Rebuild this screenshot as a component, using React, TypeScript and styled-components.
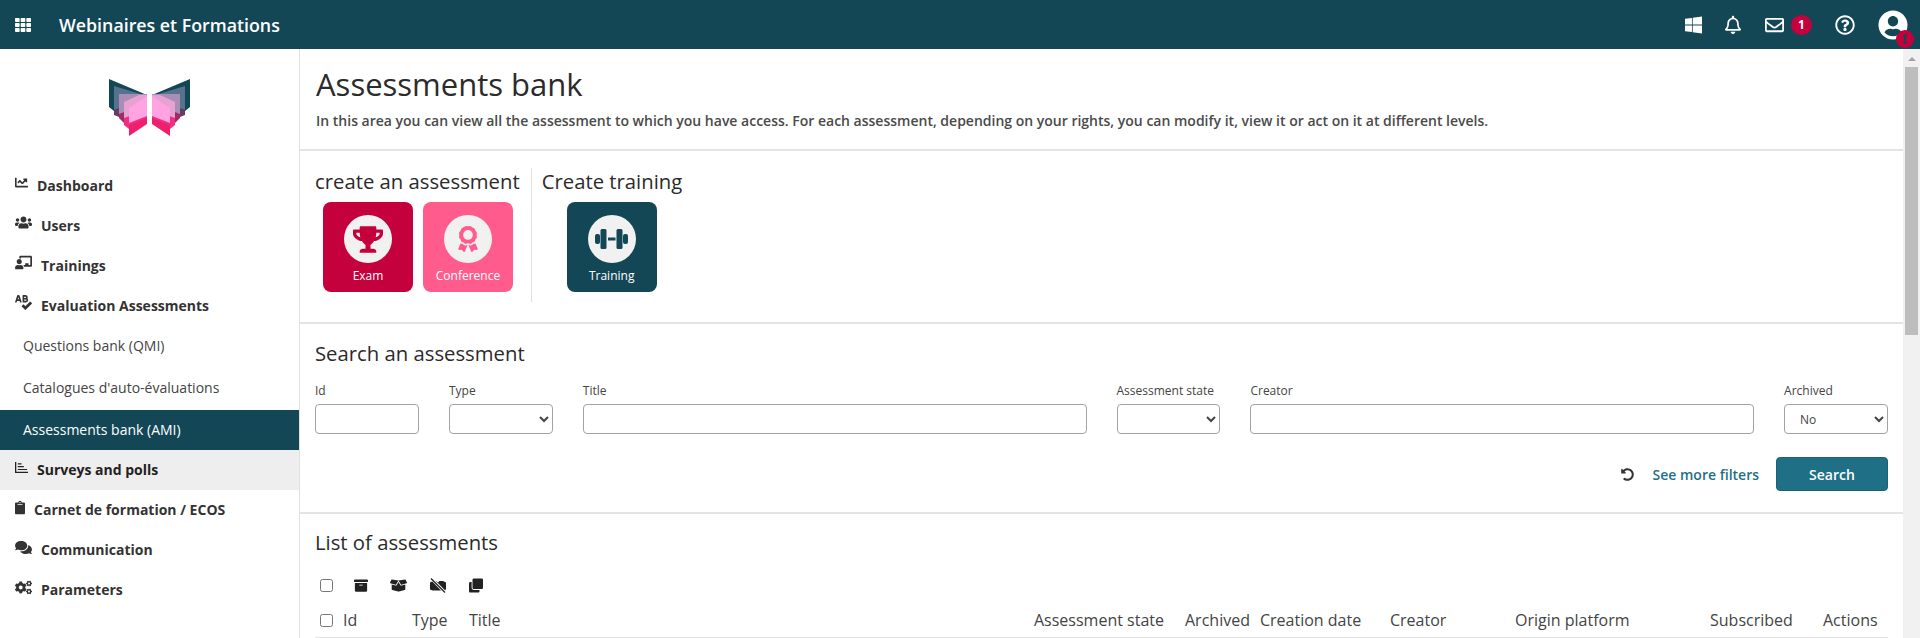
import React from 'react';
import styled, { createGlobalStyle } from 'styled-components';
import {
  FaAward,
  FaBoxOpen,
  FaArchive,
  FaChalkboardTeacher,
  FaChartLine,
  FaClipboard,
  FaClone,
  FaCogs,
  FaComments,
  FaExclamation,
  FaRegBell,
  FaRegEnvelope,
  FaRegQuestionCircle,
  FaSpellCheck,
  FaTh,
  FaTrophy,
  FaUndoAlt,
  FaUserCircle,
  FaUsers,
  FaWindows,
} from 'react-icons/fa';

const GlobalStyle = createGlobalStyle`
  html, body {
    margin: 0;
    height: 100%;
    overflow: hidden;
    background: #fff;
    font-family: "Open Sans", "Liberation Sans", sans-serif;
    color: #333;
  }
  * { box-sizing: border-box; }
`;

const Page = styled.div`
  display: flex;
  flex-direction: column;
  height: 638px;
  overflow: hidden;
`;

const TopBar = styled.header`
  flex: none;
  display: flex;
  align-items: center;
  height: 49px;
  padding-left: 15px;
  background: #134756;
  color: #fff;
`;

const AppName = styled.div`
  margin-left: 28px;
  font-size: 17.8px;
  font-weight: 600;
`;

const TopIcons = styled.div`
  display: flex;
  align-items: center;
  margin-left: auto;
  padding-right: 12px;
`;

const TopIcon = styled.span<{ $w: number; $gap: number }>`
  display: flex;
  margin-right: ${(p) => p.$gap}px;
  svg { width: ${(p) => p.$w}px; height: 20px; }
`;

const CountBadge = styled.span`
  display: flex;
  align-items: center;
  justify-content: center;
  width: 21px;
  height: 20px;
  margin-right: 23px;
  border-radius: 10px;
  background: #c4003d;
  font-size: 12px;
  font-weight: 700;
`;

const Avatar = styled.span`
  position: relative;
  display: flex;
  svg { width: 30px; height: 30px; }
`;

const AlertDot = styled.span`
  position: absolute;
  top: 20px;
  left: 18px;
  display: flex;
  align-items: center;
  justify-content: center;
  width: 18px;
  height: 18px;
  border-radius: 50%;
  background: #c4003d;
  color: #134756;
  svg { width: 10px; height: 10px; }
`;

const Body = styled.div`
  flex: 1;
  display: flex;
  min-height: 0;
`;

const Sidebar = styled.aside`
  flex: none;
  width: 300px;
  border-right: 1px solid #e0e0e0;
`;

const LogoWrap = styled.div`
  display: flex;
  justify-content: center;
  height: 116px;
  padding-top: 27px;
  padding-right: 1px;
`;

const NavItem = styled.div<{ $hover?: boolean; $lower?: boolean; $iconW: number }>`
  display: flex;
  align-items: center;
  gap: 9px;
  height: 40px;
  padding-left: 15px;
  padding-bottom: ${(p) => (p.$lower ? 2 : 0)}px;
  background: ${(p) => (p.$hover ? '#eee' : 'transparent')};
  color: ${(p) => (p.$hover ? '#222' : '#333')};
  font-size: 14px;
  font-weight: 700;
  svg { width: ${(p) => p.$iconW}px; height: 15px; margin-top: ${(p) => (p.$lower ? -4 : -6)}px; flex: none; }
`;

const SubList = styled.div`
  padding-bottom: 2px;
`;

const SubItem = styled.div`
  display: flex;
  align-items: center;
  height: 41.5px;
  padding-left: 23px;
  color: #444;
  font-size: 14px;
`;

const ActiveSubItem = styled(SubItem)`
  height: 40px;
  padding-bottom: 2px;
  background: #134756;
  color: #fff;
`;

const Main = styled.main`
  flex: 1;
  min-width: 0;
`;

const Intro = styled.section`
  height: 102px;
  padding: 15px 16px 0;
  border-bottom: 2px solid #e4e4e4;
`;

const PageTitle = styled.h1`
  margin: 0;
  font-size: 31px;
  font-weight: 500;
  line-height: 41px;
  color: #2b2b2b;
`;

const PageText = styled.p`
  margin: 6px 0 0;
  font-size: 14px;
  font-weight: 600;
  line-height: 19px;
  color: #4a4a4a;
`;

const CreateSection = styled.section`
  display: flex;
  height: 173px;
  padding: 17px 15px 0;
  border-bottom: 2px solid #e4e4e4;
`;

const CreateGroup = styled.div<{ $divider?: boolean }>`
  height: 134px;
  padding-right: 11px;
  margin-right: 10px;
  border-right: ${(p) => (p.$divider ? '1px solid #e0e0e0' : 'none')};
`;

const SectionTitle = styled.h2`
  margin: 0;
  font-size: 20.3px;
  font-weight: 400;
  line-height: 27px;
  color: #2b2b2b;
`;

const Tiles = styled.div<{ $indent: number }>`
  display: flex;
  gap: 10px;
  margin-top: 7px;
  padding-left: ${(p) => p.$indent}px;
`;

const Tile = styled.div<{ $bg: string }>`
  display: flex;
  flex-direction: column;
  align-items: center;
  width: 90px;
  height: 90px;
  padding-top: 13px;
  border-radius: 8px;
  background: ${(p) => p.$bg};
  color: #fff;
  font-size: 12px;
  line-height: 16px;
  svg { color: ${(p) => p.$bg}; }
`;

const TileCircle = styled.span<{ $w: number; $h: number }>`
  display: flex;
  align-items: center;
  justify-content: center;
  width: 48px;
  height: 48px;
  margin-bottom: 5px;
  border-radius: 50%;
  background: #f1f1f1;
  svg { width: ${(p) => p.$w}px; height: ${(p) => p.$h}px; }
`;

const SearchSection = styled.section`
  height: 190px;
  padding: 16px 15px 0;
  border-bottom: 2px solid #e4e4e4;
`;

const FilterGrid = styled.div`
  display: grid;
  grid-template-columns: 104fr 104fr 504fr 104fr 504fr 104fr;
  column-gap: 30px;
  margin-top: 16px;
`;

const Field = styled.label`
  display: flex;
  flex-direction: column;
  gap: 5px;
  font-size: 12px;
  line-height: 16px;
  color: #444;
`;

const TextInput = styled.input`
  width: 100%;
  height: 30px;
  border: 1px solid #a3a3a3;
  border-radius: 4px;
  background: #fff;
`;

const SelectInput = styled.select`
  width: 100%;
  height: 30px;
  padding-left: 11px;
  border: 1px solid #a3a3a3;
  border-radius: 4px;
  background: #fff;
  color: #444;
  font-family: inherit;
  font-size: 12px;
`;

const SearchActions = styled.div`
  display: flex;
  align-items: center;
  justify-content: flex-end;
  margin-top: 23px;
`;

const ResetIcon = styled.span`
  display: flex;
  margin-right: 19px;
  svg { width: 13px; height: 13px; }
`;

const MoreFilters = styled.a`
  margin-right: 17px;
  color: #1f6f87;
  font-size: 14px;
  font-weight: 600;
`;

const SearchButton = styled.button`
  width: 112px;
  height: 34px;
  border: 1px solid #1a6076;
  border-radius: 4px;
  background: #1f6f87;
  color: #fff;
  font-family: inherit;
  font-size: 14px;
  font-weight: 600;
`;

const ListSection = styled.section`
  padding: 15px 15px 0;
`;

const BulkBar = styled.div`
  display: flex;
  align-items: center;
  height: 20px;
  margin-top: 19px;
  padding-left: 5px;
  color: #222;
`;

const Check = styled.input.attrs({ type: 'checkbox' })`
  width: 13px;
  height: 13px;
  margin: 0;
  flex: none;
`;

const BulkIcon = styled.span<{ $w: number; $left: number }>`
  display: flex;
  margin-left: ${(p) => p.$left}px;
  svg { width: ${(p) => p.$w}px; height: 15px; }
`;

const HeadRow = styled.div`
  display: grid;
  grid-template-columns: 28px 69px 57px 565px 151px 75px 130px 125px 195px 113px 65px;
  align-items: center;
  height: 35px;
  margin-top: 9px;
  padding-bottom: 1px;
  border-bottom: 2px solid #e4e4e4;
  font-size: 16px;
  color: #444;
  input { margin-left: 5px; }
`;

const ScrollTrack = styled.div`
  flex: none;
  width: 17px;
  background: #f1f1f1;
`;

const ScrollArrow = styled.span`
  display: block;
  width: 0;
  height: 0;
  margin: 8px auto 0;
  border: 4px solid transparent;
  border-top: 0;
  border-bottom: 4px solid #a3a3a3;
`;

const ScrollThumb = styled.span`
  display: block;
  width: 13px;
  height: 268px;
  margin: 6px 0 0 2px;
  background: #bdbdbd;
`;

const SurveyIcon: React.FC = () => (
  <svg viewBox="0 0 14 12" fill="currentColor">
    <path d="M0 0h1.4v10.6H14V12H0z" />
    <path d="M3 1.5h4v1.3H3zM3 4.5h6.5v1.3H3zM3 7.5h10v1.3H3z" />
  </svg>
);

const HiddenBoxIcon: React.FC = () => (
  <svg viewBox="0 0 18 15" fill="currentColor">
    <path d="M1 4.5 4 3h3.5l1.5 1.5L10.5 3H14l3 1.5v7L14.5 12.5H3.5L1 11.5z" />
    <path d="M2 0 16 14.5" stroke="#fff" strokeWidth="3" />
    <path d="M2 0.5 16 14.5" stroke="currentColor" strokeWidth="1.3" />
  </svg>
);

const TrainingIcon: React.FC = () => (
  <svg viewBox="0 0 33 20" fill="currentColor">
    <rect x="0" y="5" width="5" height="10" rx="2" />
    <rect x="5.5" y="0" width="6" height="20" rx="1.5" />
    <rect x="13" y="8.5" width="7.5" height="3" />
    <rect x="21.5" y="0" width="6" height="20" rx="1.5" />
    <rect x="28" y="5" width="5" height="10" rx="2" />
  </svg>
);

const navTop = [
  { icon: <FaChartLine />, w: 13, label: 'Dashboard' },
  { icon: <FaUsers />, w: 17, label: 'Users' },
  { icon: <FaChalkboardTeacher />, w: 17, label: 'Trainings' },
  { icon: <FaSpellCheck />, w: 17, label: 'Evaluation Assessments' },
];

const navBottom = [
  { icon: <FaClipboard />, w: 10, label: 'Carnet de formation / ECOS' },
  { icon: <FaComments />, w: 17, label: 'Communication' },
  { icon: <FaCogs />, w: 17, label: 'Parameters' },
];

const columns = ['Id', 'Type', 'Title', 'Assessment state', 'Archived', 'Creation date', 'Creator', 'Origin platform', 'Subscribed', 'Actions'];

// layers of the logo: stair pieces underneath, then the pages from dark to pale
const Wing: React.FC = () => (
  <>
    <polygon fill="#6e3a60" points="115,105 148,100 148,110 120,117 115,115" />
    <polygon fill="#a02c66" points="120,110 148,105 148,115 125,123 120,118" />
    <polygon fill="#f22e84" points="125,116 148,110 148,120 130,129 125,125" />
    <polygon fill="#ee1f6c" points="130,125 148,118 148,124 130,136" />
    <polygon fill="#134756" points="110,79 148,95 115,111 110,107" />
    <polygon fill="#56728e" points="115,86 148,96 148,99 115,110" />
    <polygon fill="#a88db6" points="120,94 148,94 148,103 120,114" />
    <polygon fill="#e8a2d2" points="125,102 140,95 148,95 148,110 125,118" />
    <polygon fill="#ffa3e2" points="130,108 148,96 148,116 130,123" />
  </>
);

export default function App() {
  return (
    <Page>
      <GlobalStyle />
      <TopBar>
        <FaTh size={16} />
        <AppName>Webinaires et Formations</AppName>
        <TopIcons>
          <TopIcon $w={17} $gap={23}><FaWindows /></TopIcon>
          <TopIcon $w={16} $gap={24}><FaRegBell /></TopIcon>
          <TopIcon $w={19} $gap={7}><FaRegEnvelope /></TopIcon>
          <CountBadge>1</CountBadge>
          <TopIcon $w={20} $gap={23}><FaRegQuestionCircle /></TopIcon>
          <Avatar>
            <FaUserCircle />
            <AlertDot><FaExclamation /></AlertDot>
          </Avatar>
        </TopIcons>
      </TopBar>
      <Body>
        <Sidebar>
          <LogoWrap>
            <svg width="84" height="62" viewBox="108 76 84 62">
              <Wing />
              <g transform="translate(301 0) scale(-1 1)"><Wing /></g>
            </svg>
          </LogoWrap>
          {navTop.map((n) => (
            <NavItem key={n.label} $iconW={n.w}>{n.icon}{n.label}</NavItem>
          ))}
          <SubList>
            <SubItem>Questions bank (QMI)</SubItem>
            <SubItem>Catalogues d'auto-évaluations</SubItem>
          </SubList>
          <ActiveSubItem>Assessments bank (AMI)</ActiveSubItem>
          <NavItem $hover $lower $iconW={13}><SurveyIcon />Surveys and polls</NavItem>
          {navBottom.map((n) => (
            <NavItem key={n.label} $lower $iconW={n.w}>{n.icon}{n.label}</NavItem>
          ))}
        </Sidebar>
        <Main>
          <Intro>
            <PageTitle>Assessments bank</PageTitle>
            <PageText>In this area you can view all the assessment to which you have access. For each assessment, depending on your rights, you can modify it, view it or act on it at different levels.</PageText>
          </Intro>
          <CreateSection>
            <CreateGroup $divider>
              <SectionTitle>create an assessment</SectionTitle>
              <Tiles $indent={8}>
                <Tile $bg="#c4003d">
                  <TileCircle $w={30} $h={27}><FaTrophy /></TileCircle>
                  Exam
                </Tile>
                <Tile $bg="#ff5c8d">
                  <TileCircle $w={20} $h={26}><FaAward /></TileCircle>
                  Conference
                </Tile>
              </Tiles>
            </CreateGroup>
            <CreateGroup>
              <SectionTitle>Create training</SectionTitle>
              <Tiles $indent={25}>
                <Tile $bg="#134756">
                  <TileCircle $w={33} $h={20}><TrainingIcon /></TileCircle>
                  Training
                </Tile>
              </Tiles>
            </CreateGroup>
          </CreateSection>
          <SearchSection>
            <SectionTitle>Search an assessment</SectionTitle>
            <FilterGrid>
              <Field>Id<TextInput /></Field>
              <Field>Type<SelectInput /></Field>
              <Field>Title<TextInput /></Field>
              <Field>Assessment state<SelectInput /></Field>
              <Field>Creator<TextInput /></Field>
              <Field>Archived<SelectInput defaultValue="No"><option>No</option></SelectInput></Field>
            </FilterGrid>
            <SearchActions>
              <ResetIcon><FaUndoAlt /></ResetIcon>
              <MoreFilters>See more filters</MoreFilters>
              <SearchButton>Search</SearchButton>
            </SearchActions>
          </SearchSection>
          <ListSection>
            <SectionTitle>List of assessments</SectionTitle>
            <BulkBar>
              <Check />
              <BulkIcon $w={14} $left={21}><FaArchive /></BulkIcon>
              <BulkIcon $w={17} $left={22}><FaBoxOpen /></BulkIcon>
              <BulkIcon $w={18} $left={22}><HiddenBoxIcon /></BulkIcon>
              <BulkIcon $w={14} $left={22}><FaClone /></BulkIcon>
            </BulkBar>
            <HeadRow>
              <Check />
              {columns.map((c) => <span key={c}>{c}</span>)}
            </HeadRow>
          </ListSection>
        </Main>
        <ScrollTrack>
          <ScrollArrow />
          <ScrollThumb />
        </ScrollTrack>
      </Body>
    </Page>
  );
}
